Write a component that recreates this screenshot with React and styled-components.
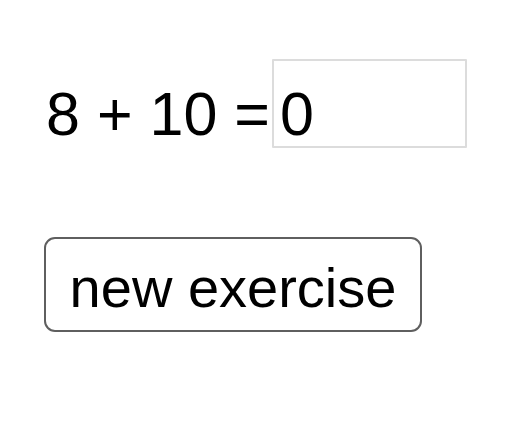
import React, { useState } from 'react';
import styled, { createGlobalStyle } from 'styled-components';

const GlobalStyle = createGlobalStyle`
    html, body {
        margin: 0;
        padding: 0;
        background: #ffffff;
    }

    body {
        font-family: "Liberation Sans", Arial, sans-serif;
        color: #000000;
    }
`;

const randomTerm = () => Math.floor(Math.random() * 20);

const App = () => {
    const [exercise, setExercise] = useState({ a: 8, b: 10 });
    const [answer, setAnswer] = useState('0');

    const newExercise = () => {
        setExercise({ a: randomTerm(), b: randomTerm() });
        setAnswer('0');
    };

    return (
        <StyledPage>
            <GlobalStyle />

            <ExerciseRow>
                <Question>{exercise.a} + {exercise.b} =</Question>
                <AnswerInput
                    type='text'
                    value={answer}
                    onChange={(e) => setAnswer(e.target.value)}
                />
            </ExerciseRow>

            <NewButton onClick={newExercise}>new exercise</NewButton>
        </StyledPage>
    );
};

export default App;


/* Styled Components */
const StyledPage = styled.div`
    display: flex;
    flex-direction: column;
    align-items: flex-start;
    gap: 88px;
    padding: 59px 0 0 46px;
`;

const ExerciseRow = styled.div`
    display: flex;
    align-items: baseline;
    gap: 2px;
`;

const Question = styled.span`
    font-size: 61px;
    line-height: normal;
    white-space: pre;
`;

const AnswerInput = styled.input`
    box-sizing: border-box;
    width: 195px;
    height: 89px;
    margin: 0;
    padding: 22px 6px 2px 6px;
    border: 2px solid #dcdcdc;
    border-radius: 1px;
    font-family: "Liberation Sans", Arial, sans-serif;
    font-size: 61px;
    line-height: 61px;
    color: #000000;
    background: #ffffff;
    outline: none;
`;

const NewButton = styled.button`
    box-sizing: border-box;
    width: 378px;
    height: 95px;
    margin: 0 0 0 -2px;
    padding: 6px 0 0 0;
    border: 2px solid #5f5f5f;
    border-radius: 11px;
    background: #ffffff;
    font-family: "Liberation Sans", Arial, sans-serif;
    font-size: 56px;
    color: #000000;
    cursor: pointer;
`;
